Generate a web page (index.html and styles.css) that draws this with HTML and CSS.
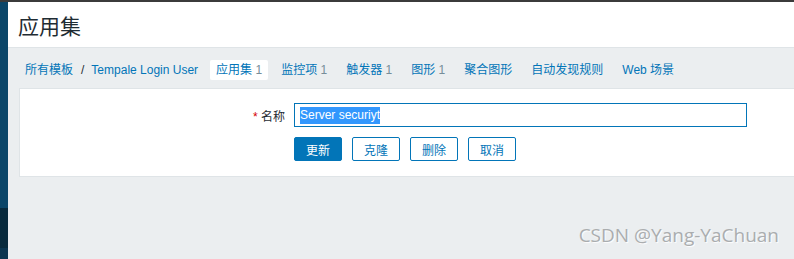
FILE: index.html
```html
<!DOCTYPE html>
<html lang="zh">

<head>
	<meta charset="UTF-8" />
	<title>应用集</title>
	<link rel="stylesheet" href="styles.css">
</head>

<body>
	<div class="sidebar">
		<div class="side-top"></div>
		<div class="side-dark"></div>
		<div class="side-end"></div>
	</div>
	<div class="page">
		<div class="header">
			<h1>应用集</h1>
		</div>
		<div class="content">
			<ul class="nav">
				<li class="crumb"><a>所有模板</a></li>
				<li class="sep">/</li>
				<li class="crumb host"><a>Tempale Login User</a></li>
				<li class="tab active"><a>应用集</a> <span class="num">1</span></li>
				<li class="tab"><a>监控项</a> <span class="num">1</span></li>
				<li class="tab"><a>触发器</a> <span class="num">1</span></li>
				<li class="tab"><a>图形</a> <span class="num">1</span></li>
				<li class="tab"><a>聚合图形</a></li>
				<li class="tab"><a>自动发现规则</a></li>
				<li class="tab"><a>Web 场景</a></li>
			</ul>
			<div class="panel">
				<div class="row">
					<label class="label"><span class="req">*</span> 名称</label>
					<div class="input"><span class="sel">Server securiyt</span></div>
				</div>
				<div class="row">
					<div class="label"></div>
					<div class="buttons">
						<button class="btn primary">更新</button>
						<button class="btn">克隆</button>
						<button class="btn">删除</button>
						<button class="btn">取消</button>
					</div>
				</div>
			</div>
		</div>
	</div>
	<div class="mark">CSDN @Yang-YaChuan</div>
</body>

</html>
```

FILE: styles.css
```css
html,
body {
	margin: 0;
	height: 100%;
}

body {
	display: flex;
	border-top: 2px solid #3b3b3b;
	box-sizing: border-box;
	background: #ebeef0;
	overflow: hidden;
	font-family: "Liberation Sans", Arial, "Noto Sans CJK SC", sans-serif;
	font-size: 12px;
	color: #1f2c33;
}

.sidebar {
	width: 8px;
	display: flex;
	flex-direction: column;
}

.side-top {
	height: 206px;
	background: #0b4669;
}

.side-dark {
	height: 40px;
	background: #082a3d;
}

.side-end {
	flex: 1;
	background: #0b3550;
}

.page {
	flex: 1;
	min-width: 0;
}

.header {
	height: 45px;
	background: #fff;
	border-bottom: 1px solid #dfe4e7;
	display: flex;
	align-items: center;
	padding-left: 10px;
}

.header h1 {
	margin: 0;
	font-size: 21px;
	font-weight: normal;
	color: #1f2c33;
}

.content {
	padding: 12px 0 0 11px;
}

.nav {
	list-style: none;
	margin: 0;
	padding: 0 0 0 6px;
	display: flex;
	align-items: center;
	height: 20px;
}

.nav li {
	line-height: 20px;
	white-space: nowrap;
}

.nav a {
	color: #0275b8;
}

.nav .sep {
	margin: 0 7px 0 8px;
	color: #1f2c33;
}

.nav .host {
	margin-right: 12px;
}

.nav .tab {
	padding: 0 6px;
	margin-right: 7px;
	border-radius: 2px;
}

.nav .tab.active {
	background: #fff;
}

.nav .num {
	color: #768d99;
}

.panel {
	margin-top: 8px;
	background: #fff;
	border: 1px solid #dfe4e7;
	border-right: 0;
	padding: 14px 0 15px 0;
}

.row {
	display: flex;
	align-items: center;
}

.row + .row {
	margin-top: 10px;
}

.label {
	width: 265px;
	margin-right: 9px;
	text-align: right;
	font-size: 12px;
}

.req {
	color: #d40000;
}

.input {
	width: 453px;
	height: 24px;
	box-sizing: border-box;
	border: 1px solid #0275b8;
	padding: 0 5px;
	display: flex;
	align-items: center;
	font-size: 12px;
}

.sel {
	background: #3297fd;
	color: #fff;
	line-height: 17px;
}

.buttons {
	display: flex;
	gap: 10px;
}

.btn {
	width: 48px;
	height: 24px;
	padding: 0;
	border: 1px solid #0275b8;
	border-radius: 2px;
	background: #fff;
	color: #0275b8;
	font-family: "Liberation Sans", Arial, "Noto Sans CJK SC", sans-serif;
	font-size: 12px;
}

.btn.primary {
	background: #0275b8;
	color: #fff;
}

.mark {
	position: absolute;
	right: 15px;
	bottom: 11px;
	font-family: "Open Sans", sans-serif;
	font-size: 19px;
	color: #aaadaf;
	text-shadow: 1px 1px 1px #fff;
}
```
